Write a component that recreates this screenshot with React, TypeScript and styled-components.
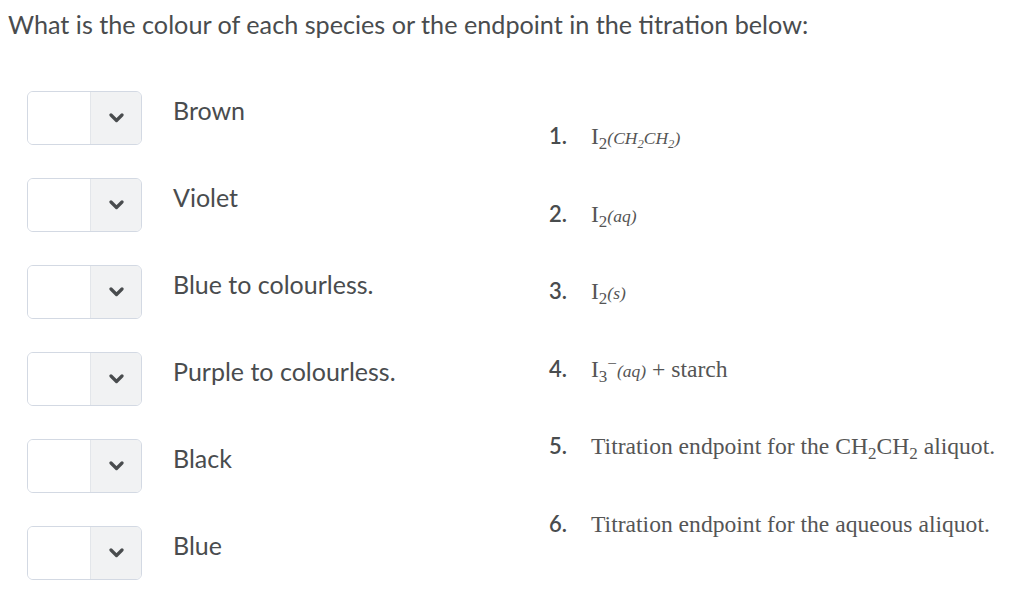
import React from 'react';
import styled, { createGlobalStyle } from 'styled-components';

const GlobalStyle = createGlobalStyle`
  html, body {
    margin: 0;
    padding: 0;
    background: #ffffff;
  }
  body {
    font-family: Lato, "Noto Sans", sans-serif;
    color: #494c4e;
  }
`;

const Page = styled.div`
  padding: 8px 8px 0 8px;
`;

const Prompt = styled.div`
  font-size: 25.2px;
  line-height: 32px;
  color: #494c4e;
`;

const Matching = styled.div`
  display: flex;
  margin-top: 51px;
`;

const ChoiceColumn = styled.div`
  display: flex;
  flex-direction: column;
  gap: 33px;
  padding-left: 19px;
  width: 522px;
`;

const ChoiceRow = styled.div`
  display: flex;
  align-items: flex-start;
  height: 54px;
`;

const Select = styled.div`
  display: flex;
  flex: none;
  width: 115px;
  height: 54px;
  box-sizing: border-box;
  border: 1px solid #d3d9e3;
  border-radius: 6px;
  overflow: hidden;
  box-shadow: inset 0 2px 0 rgba(185, 194, 208, 0.2);
`;

const SelectValue = styled.div`
  width: 62px;
  background: #ffffff;
`;

const SelectToggle = styled.div`
  flex: 1;
  display: flex;
  align-items: center;
  justify-content: center;
  background: #f1f2f3;
  border-left: 1px solid #e3e6ea;
`;

const ChoiceLabel = styled.div`
  font-size: 25px;
  line-height: 30px;
  margin: 4px 0 0 31px;
  white-space: nowrap;
`;

const PromptList = styled.ol`
  list-style: none;
  margin: 30px 0 0 0;
  padding: 0;
  display: flex;
  flex-direction: column;
  gap: 47.6px;
`;

const PromptItem = styled.li`
  display: flex;
  align-items: baseline;
  height: 30px;
  line-height: 30px;
  white-space: nowrap;
`;

const ItemNumber = styled.span`
  font-family: Lato, sans-serif;
  font-weight: 600;
  font-size: 22px;
  width: 42px;
  color: #494c4e;
`;

const MathText = styled.span`
  font-family: "Liberation Serif", "Times New Roman", serif;
  font-size: 23.6px;
  color: #555555;
`;

const Italic = styled.i`
  font-size: 17.5px;
`;

const Sub = styled.sub`
  font-size: 0.72em;
  line-height: 0;
  vertical-align: -0.3em;
`;

const Sup = styled.sup`
  font-size: 0.72em;
  line-height: 0;
  vertical-align: 0.5em;
`;

const Chevron = () => (
  <svg width="15" height="10" viewBox="0 0 15 10">
    <path d="M2 2 L7.5 7.5 L13 2" fill="none" stroke="#494c4e" strokeWidth="3.2" strokeLinecap="round" strokeLinejoin="round" />
  </svg>
);

const choices = ['Brown', 'Violet', 'Blue to colourless.', 'Purple to colourless.', 'Black', 'Blue'];

export default function App() {
  return (
    <Page>
      <GlobalStyle />
      <Prompt>What is the colour of each species or the endpoint in the titration below:</Prompt>
      <Matching>
        <ChoiceColumn>
          {choices.map((c) => (
            <ChoiceRow key={c}>
              <Select>
                <SelectValue />
                <SelectToggle>
                  <Chevron />
                </SelectToggle>
              </Select>
              <ChoiceLabel>{c}</ChoiceLabel>
            </ChoiceRow>
          ))}
        </ChoiceColumn>
        <PromptList>
          <PromptItem>
            <ItemNumber>1.</ItemNumber>
            <MathText>
              I<Sub>2</Sub><Italic>(CH<Sub>2</Sub>CH<Sub>2</Sub>)</Italic>
            </MathText>
          </PromptItem>
          <PromptItem>
            <ItemNumber>2.</ItemNumber>
            <MathText>
              I<Sub>2</Sub><Italic>(aq)</Italic>
            </MathText>
          </PromptItem>
          <PromptItem>
            <ItemNumber>3.</ItemNumber>
            <MathText>
              I<Sub>2</Sub><Italic>(s)</Italic>
            </MathText>
          </PromptItem>
          <PromptItem>
            <ItemNumber>4.</ItemNumber>
            <MathText>
              I<Sub>3</Sub><Sup>−</Sup><Italic>(aq)</Italic> + starch
            </MathText>
          </PromptItem>
          <PromptItem>
            <ItemNumber>5.</ItemNumber>
            <MathText>
              Titration endpoint for the CH<Sub>2</Sub>CH<Sub>2</Sub> aliquot.
            </MathText>
          </PromptItem>
          <PromptItem>
            <ItemNumber>6.</ItemNumber>
            <MathText>Titration endpoint for the aqueous aliquot.</MathText>
          </PromptItem>
        </PromptList>
      </Matching>
    </Page>
  );
}
